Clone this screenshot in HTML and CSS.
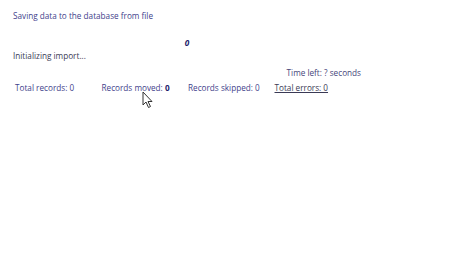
FILE: index.html
```html
<!DOCTYPE html>
<html lang="en">

<head>
    <meta charset="UTF-8">
    <meta name="viewport" content="width=device-width, initial-scale=1.0">
    <title>Import</title>
    <link rel="stylesheet" href="styles.css">
</head>

<body>
    <div class="import-box">
        <div class="import-title">Saving data to the database from file</div>

        <div class="progress">
            <span class="progress-value">0</span>
        </div>

        <div class="import-status">Initializing import...</div>

        <div class="time-left">Time left: ? seconds</div>

        <div class="stats">
            <div class="stat">Total records: 0</div>
            <div class="stat">Records moved: <b>0</b></div>
            <div class="stat">Records skipped: 0</div>
            <div class="stat"><a class="errors" href="#">Total errors: 0</a></div>
        </div>
    </div>

    <svg class="cursor" width="12" height="18" viewBox="0 0 12 18">
        <path d="M1 1 L1 14 L4 11 L6.5 16.5 L8.5 15.5 L6 10.5 L10 10.5 Z" fill="#fff" stroke="#333" stroke-width="1"
            stroke-linejoin="round" />
    </svg>
</body>

</html>
```

FILE: styles.css
```css
body {
    margin: 0;
    background: #fff;
    font-family: "Open Sans", sans-serif;
    font-size: 8.2px;
    color: #3f3f8c;
}

.import-box {
    width: 348px;
    margin-left: 13px;
    padding-top: 10px;
}

.import-title {
    line-height: 11px;
}

.progress {
    margin-top: 16px;
    height: 11px;
    line-height: 11px;
    text-align: center;
}

.progress-value {
    font-weight: bold;
    font-style: italic;
    color: #1c1c6b;
}

.import-status {
    margin-top: 2px;
    line-height: 11px;
    color: #3a3a55;
}

.time-left {
    margin-top: 6px;
    line-height: 11px;
    text-align: right;
    color: #45457a;
}

.stats {
    display: grid;
    grid-template-columns: repeat(4, 1fr);
    margin-top: 4px;
    padding-left: 2px;
    line-height: 11px;
}

.stat b {
    color: #1c1c6b;
}

.errors {
    color: #3a3a55;
    text-decoration: underline;
}

.cursor {
    position: absolute;
    left: 142px;
    top: 91px;
}
```
